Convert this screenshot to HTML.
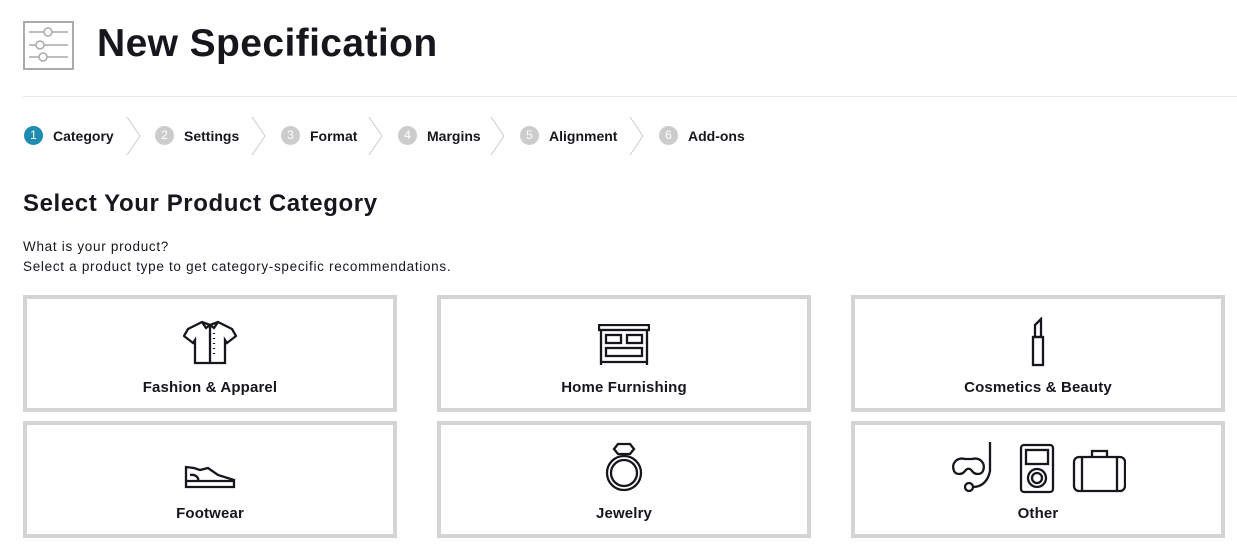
<!DOCTYPE html><html><head><style>
body{margin:0;width:1237px;height:547px;background:#fff;font-family:"Liberation Sans",sans-serif;color:#16171d;position:relative;overflow:hidden}
.a{position:absolute}
.card{position:absolute;width:366px;height:109px;border:4px solid #d4d4d4;box-sizing:content-box}
.card span{position:absolute;left:0;right:0;text-align:center;top:80px;font-weight:bold;font-size:15px;letter-spacing:0.15px}
.card svg{position:absolute;left:50%;transform:translateX(-50%)}
.st{position:absolute;top:126px;font-weight:bold;font-size:14px;display:flex;align-items:center}
.st i{display:inline-block;width:19px;height:19px;border-radius:50%;background:#ccc;color:#fff;font-style:normal;font-weight:normal;font-size:12px;text-align:center;line-height:19px;margin-right:10px}
.chev{position:absolute;top:117px}
</style></head><body>
<svg class="a" style="left:23px;top:21px" width="51" height="49" viewBox="0 0 51 49"><rect x="1" y="1" width="49" height="47" fill="none" stroke="#aaa" stroke-width="2"/><g stroke="#aaa" stroke-width="1.5" fill="#fff"><line x1="6" y1="11" x2="45" y2="11"/><line x1="6" y1="24" x2="45" y2="24"/><line x1="6" y1="36" x2="45" y2="36"/><circle cx="25" cy="11" r="4"/><circle cx="17" cy="24" r="4"/><circle cx="20" cy="36" r="4"/></g></svg>
<div class="a" style="left:97px;top:22px;font-size:39px;font-weight:bold;letter-spacing:0.4px">New Specification</div>
<div class="a" style="left:23px;top:96px;width:1214px;height:1px;background:#e6e6e6"></div>
<div class="st" style="left:24px"><i style="background:#1e8bb0">1</i>Category</div>
<div class="st" style="left:155px"><i>2</i>Settings</div>
<div class="st" style="left:281px"><i>3</i>Format</div>
<div class="st" style="left:398px"><i>4</i>Margins</div>
<div class="st" style="left:520px"><i>5</i>Alignment</div>
<div class="st" style="left:659px"><i>6</i>Add-ons</div>
<svg class="chev" style="left:126px" width="16" height="38"><path d="M1 0L14 19L1 38" fill="none" stroke="#ccc"/></svg>
<svg class="chev" style="left:251px" width="16" height="38"><path d="M1 0L14 19L1 38" fill="none" stroke="#ccc"/></svg>
<svg class="chev" style="left:368px" width="16" height="38"><path d="M1 0L14 19L1 38" fill="none" stroke="#ccc"/></svg>
<svg class="chev" style="left:490px" width="16" height="38"><path d="M1 0L14 19L1 38" fill="none" stroke="#ccc"/></svg>
<svg class="chev" style="left:629px" width="16" height="38"><path d="M1 0L14 19L1 38" fill="none" stroke="#ccc"/></svg>
<div class="a" style="left:23px;top:190px;font-size:24px;font-weight:bold;letter-spacing:0.6px">Select Your Product Category</div>
<div class="a" style="left:23px;top:237px;font-size:13.5px;line-height:20px;letter-spacing:0.7px">What is your product?<br>Select a product type to get category-specific recommendations.</div>

<div class="card" style="left:23px;top:295px"><svg style="top:20px" width="54" height="46" viewBox="0 0 54 46" fill="none" stroke="#16171d" stroke-width="2.3"><path d="M19 3L5 10L1 17L10 24L12 21V44H42V21L44 24L53 17L49 10L35 3L27 6Z"/><path d="M19 3L23 9L27 6L31 9L35 3"/><line x1="27" y1="6" x2="27" y2="44"/><path d="M31 14v1M31 19v1M31 24v1M31 29v1M31 34v1"/></svg><span>Fashion &amp; Apparel</span></div>
<div class="card" style="left:437px;top:295px"><svg style="top:25px" width="52" height="42" viewBox="0 0 52 42" fill="none" stroke="#16171d" stroke-width="2.3"><rect x="1" y="1" width="50" height="5"/><path d="M3 6V41M49 6V41M3 38H49"/><rect x="8" y="11" width="15" height="8"/><rect x="29" y="11" width="15" height="8"/><rect x="8" y="24" width="36" height="8"/></svg><span>Home Furnishing</span></div>
<div class="card" style="left:851px;top:295px"><svg style="top:18px" width="14" height="50" viewBox="0 0 14 50" fill="none" stroke="#16171d" stroke-width="2.3"><path d="M4 20V8L10 2V20Z"/><rect x="2" y="20" width="10" height="28"/></svg><span>Cosmetics &amp; Beauty</span></div>
<div class="card" style="left:23px;top:421px"><svg style="top:40px" width="52" height="24" viewBox="0 0 52 24" fill="none" stroke="#16171d" stroke-width="2.3"><path d="M2 2V22H50V15L34 10L24 3L16 5L10 3Z"/><path d="M2 16H50M6 10C12 9 15 13 14 16"/></svg><span>Footwear</span></div>
<div class="card" style="left:437px;top:421px"><svg style="top:17px" width="40" height="52" viewBox="0 0 40 52" fill="none" stroke="#16171d" stroke-width="2.3"><path d="M14 2H26L30 7L26 12H14L10 7Z"/><circle cx="20" cy="31" r="17"/><circle cx="20" cy="31" r="13"/></svg><span>Jewelry</span></div>
<div class="card" style="left:851px;top:421px"><svg style="top:16px" width="176" height="54" viewBox="0 0 176 54" fill="none" stroke="#16171d" stroke-width="2.3"><path d="M15 18C7 16 1 22 4 30C6 34 12 34 15 30C17 27 20 27 22 30C25 34 31 34 33 30C36 22 30 16 22 18Z"/><circle cx="19" cy="46" r="4"/><path d="M23 46C32 46 38 40 40 30V1"/><rect x="71" y="4" width="32" height="47" rx="3"/><rect x="76" y="9" width="22" height="14"/><circle cx="87" cy="37" r="9"/><circle cx="87" cy="37" r="5"/><rect x="124" y="16" width="51" height="34" rx="5"/><path d="M142 16V10H157V16M132 16V50M167 16V50"/></svg><span>Other</span></div>
</body></html>
